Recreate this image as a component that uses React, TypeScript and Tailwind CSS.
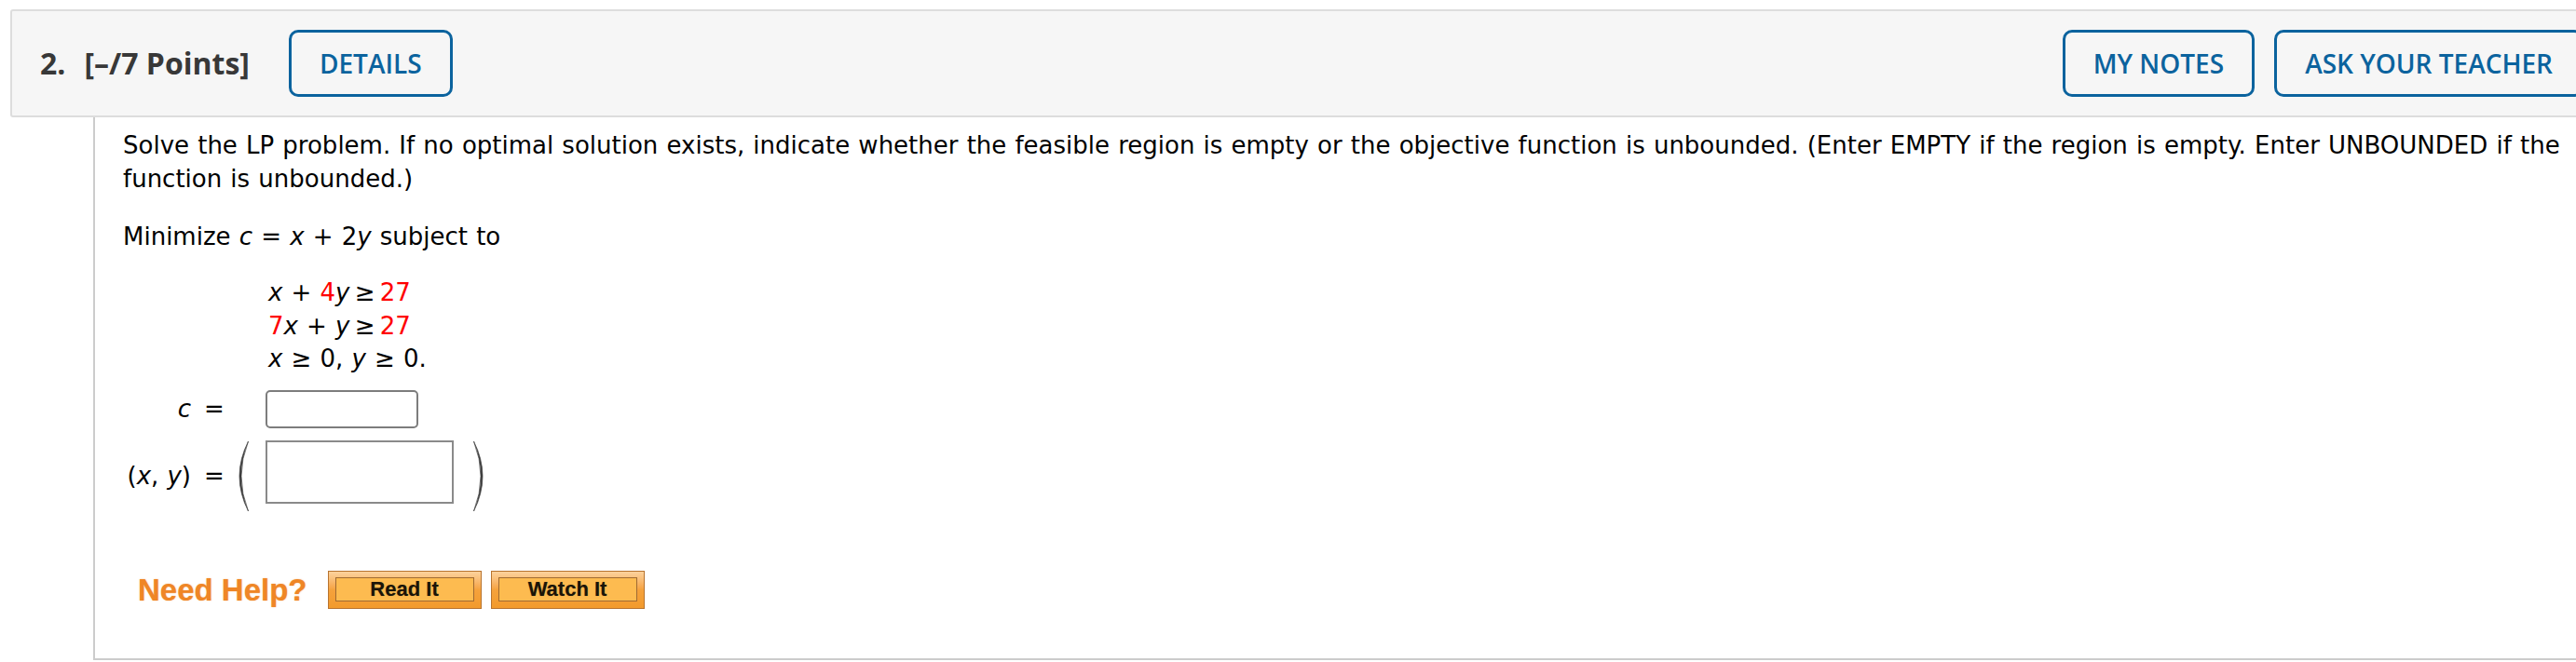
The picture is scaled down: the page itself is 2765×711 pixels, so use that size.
import React from 'react';

function Paren({ side }: { side: 'left' | 'right' }) {
  const d =
    side === 'left'
      ? 'M16.5 1 Q-2.5 38.5 16.5 76 Q1.5 38.5 16.5 1 Z'
      : 'M1.5 1 Q20.5 38.5 1.5 76 Q16.5 38.5 1.5 1 Z';
  return (
    <svg width="18" height="77" viewBox="0 0 18 77" className="shrink-0">
      <path d={d} fill="#3d3d3d" stroke="#3d3d3d" strokeWidth="0.7" strokeLinejoin="round" />
    </svg>
  );
}

function OutlineButton({ label, className = '' }: { label: string; className?: string }) {
  return (
    <button
      className={`h-[72px] rounded-[10px] border-[3px] border-[#0b639e] px-[30px] font-['Open_Sans',sans-serif] text-[28px] font-semibold text-[#0b639e] ${className}`}
    >
      {label}
    </button>
  );
}

function HelpButton({ label, className = '' }: { label: string; className?: string }) {
  return (
    <button
      className={`flex h-[41px] w-[165px] flex-col border border-[#b8742f] bg-gradient-to-b from-[#fcd29c] via-[#f5a23c] to-[#f29a2c] px-[7px] pb-[7px] pt-[6px] ${className}`}
    >
      <span className="flex w-full flex-1 items-center justify-center border border-[#9f6a33] bg-[#fdbb50] font-['Liberation_Sans',Arial,sans-serif] text-[22px] font-bold leading-none text-[#1a1408] [text-shadow:0_0_1px_rgba(0,0,0,0.35)]">
        {label}
      </span>
    </button>
  );
}

function Red({ children }: { children: React.ReactNode }) {
  return <span className="text-[#ff0000]">{children}</span>;
}

export default function App() {
  return (
    <div className="h-[711px] w-[2765px] overflow-hidden bg-white">
      <div className="w-[2800px] pl-[11px] pt-[10px]">
        {/* question header */}
        <header className="flex h-[116px] items-center rounded-[3px] border-2 border-[#dddddd] bg-[#f6f6f6] pl-[30px] pr-[25px] font-['Open_Sans',sans-serif] text-[#383838]">
          <span className="text-[32px] font-bold">2.</span>
          <span className="ml-[20px] text-[32px] font-bold">[–/7 Points]</span>
          <OutlineButton label="DETAILS" className="ml-[42px]" />
          <div className="flex-1" />
          <OutlineButton label="MY NOTES" />
          <OutlineButton label="ASK YOUR TEACHER" className="ml-[21px]" />
        </header>

        {/* question body */}
        <section className="ml-[89px] border-b-2 border-l-2 border-[#cccccc] pb-[53px] pl-[30px] pt-[12px] font-[Verdana,'DejaVu_Sans',sans-serif] text-[26px] leading-[36px] text-black [word-spacing:0.9px]">
          <p className="w-[2625px]">
            Solve the LP problem. If no optimal solution exists, indicate whether the feasible region is empty or
            the objective function is unbounded. (Enter EMPTY if the region is empty. Enter UNBOUNDED if the
            function is unbounded.)
          </p>

          <p className="mt-[26px]">
            Minimize <i>c</i> = <i>x</i> + 2<i>y</i> subject to
          </p>

          <div className="ml-[156px] mt-[25px] leading-[35.5px]">
            <div>
              <i>x</i> + <Red>4</Red>
              <i>y</i>&thinsp;≥&thinsp;<Red>27</Red>
            </div>
            <div>
              <Red>7</Red>
              <i>x</i> + <i>y</i>&thinsp;≥&thinsp;<Red>27</Red>
            </div>
            <div>
              <i>x</i> ≥ 0, <i>y</i> ≥ 0.
            </div>
          </div>

          {/* answer rows */}
          <div className="mt-[15px] flex h-[41px] items-center">
            <span className="w-[73px] text-right">
              <i>c</i>
            </span>
            <span className="ml-[14px] w-[22px] text-center">=</span>
            <div className="ml-[44px] h-[41px] w-[164px] rounded-[5px] border-2 border-[#7d7d7d] bg-white" />
          </div>

          <div className="mt-[13px] flex h-[77px] items-center">
            <span className="w-[73px] text-right">
              (<i>x</i>, <i>y</i>)
            </span>
            <span className="ml-[14px] w-[22px] text-center">=</span>
            <div className="ml-[9px]">
              <Paren side="left" />
            </div>
            <div className="ml-[17px] h-[68px] w-[202px] self-start border-2 border-[#8a8a8a] bg-white" />
            <div className="ml-[20px]">
              <Paren side="right" />
            </div>
          </div>

          <div className="mt-[63px] flex items-center">
            <span className="ml-[16px] font-['Liberation_Sans',Arial,sans-serif] text-[33px] font-bold leading-none text-[#ef8626] [text-shadow:0_0_1.5px_rgba(239,134,38,0.6)] [word-spacing:0]">
              Need Help?
            </span>
            <HelpButton label="Read It" className="ml-[22px]" />
            <HelpButton label="Watch It" className="ml-[10px]" />
          </div>
        </section>
      </div>
    </div>
  );
}
